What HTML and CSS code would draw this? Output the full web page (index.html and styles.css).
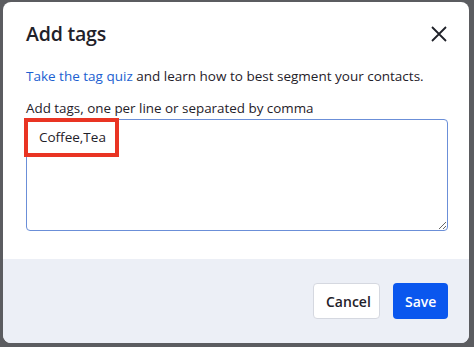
FILE: index.html
```html
<!DOCTYPE html>
<html lang="en">
<head>
  <meta charset="UTF-8">
  <title>Add tags</title>
  <link rel="stylesheet" href="styles.css">
</head>
<body>
  <div class="modal">
    <div class="modal-body">
      <div class="modal-head">
        <h2>Add tags</h2>
        <button class="close" aria-label="Close">
          <svg width="16" height="16" viewBox="0 0 16 16"><path d="M1 1L15 15M15 1L1 15" stroke="#1f2129" stroke-width="1.8" fill="none"/></svg>
        </button>
      </div>
      <p class="intro"><a href="#">Take the tag quiz</a> and learn how to best segment your contacts.</p>
      <label for="tags">Add tags, one per line or separated by comma</label>
      <div class="field">
        <textarea id="tags">Coffee,Tea</textarea>
        <span class="highlight"></span>
      </div>
    </div>
    <div class="modal-foot">
      <button class="btn btn-cancel">Cancel</button>
      <button class="btn btn-save">Save</button>
    </div>
  </div>
</body>
</html>
```

FILE: styles.css
```css
html, body {
  margin: 0;
  padding: 0;
}
body {
  background: #5b5c60;
  font-family: "Open Sans", "Noto Sans", sans-serif;
  color: #1f2129;
  padding: 2px 5px 4px 3px;
  height: 347px;
  box-sizing: border-box;
}
.modal {
  background: #fff;
  border-radius: 8px;
  overflow: hidden;
  height: 341px;
  display: flex;
  flex-direction: column;
}
.modal-body {
  padding: 0 21px 0 23px;
  height: 257px;
}
.modal-head {
  display: flex;
  justify-content: space-between;
  align-items: center;
  height: 63px;
}
.modal-head h2 {
  margin: 0;
  font-size: 19.5px;
  font-weight: 600;
  letter-spacing: -0.2px;
}
.close {
  border: none;
  background: none;
  padding: 0;
  width: 16px;
  height: 16px;
  margin-right: 1px;
}
.intro {
  margin: 1px 0 0;
  font-size: 13.5px;
  line-height: 20px;
  font-weight: 500;
}
.intro a {
  color: #1c5fd1;
  text-decoration: none;
}
label {
  display: block;
  margin-top: 12px;
  font-size: 13.4px;
  line-height: 20px;
  font-weight: 500;
}
.field {
  position: relative;
  margin-top: 1px;
}
textarea {
  display: block;
  box-sizing: border-box;
  width: 422px;
  height: 112px;
  border: 1.5px solid #6b8fd8;
  border-radius: 4px;
  padding: 8px 12px;
  font-family: inherit;
  font-size: 13.5px;
  font-weight: 500;
  color: #1f2129;
  resize: vertical;
  outline: none;
}
.highlight {
  position: absolute;
  left: -2px;
  top: -1px;
  width: 95px;
  height: 39px;
  box-sizing: border-box;
  border: 4px solid #e93423;
}
.modal-foot {
  flex: 1;
  background: #eceff6;
  display: flex;
  justify-content: flex-end;
  align-items: center;
  gap: 13px;
  padding: 0 21px 0 0;
}
.btn {
  height: 36px;
  border-radius: 4px;
  font-family: inherit;
  font-size: 14px;
  font-weight: 600;
  padding: 0 12px;
}
.btn-cancel {
  background: #fff;
  border: 1px solid #d5d8e0;
  color: #1f2129;
  width: 67px;
}
.btn-save {
  background: #0a57ee;
  border: none;
  color: #fff;
  width: 55px;
}
```
